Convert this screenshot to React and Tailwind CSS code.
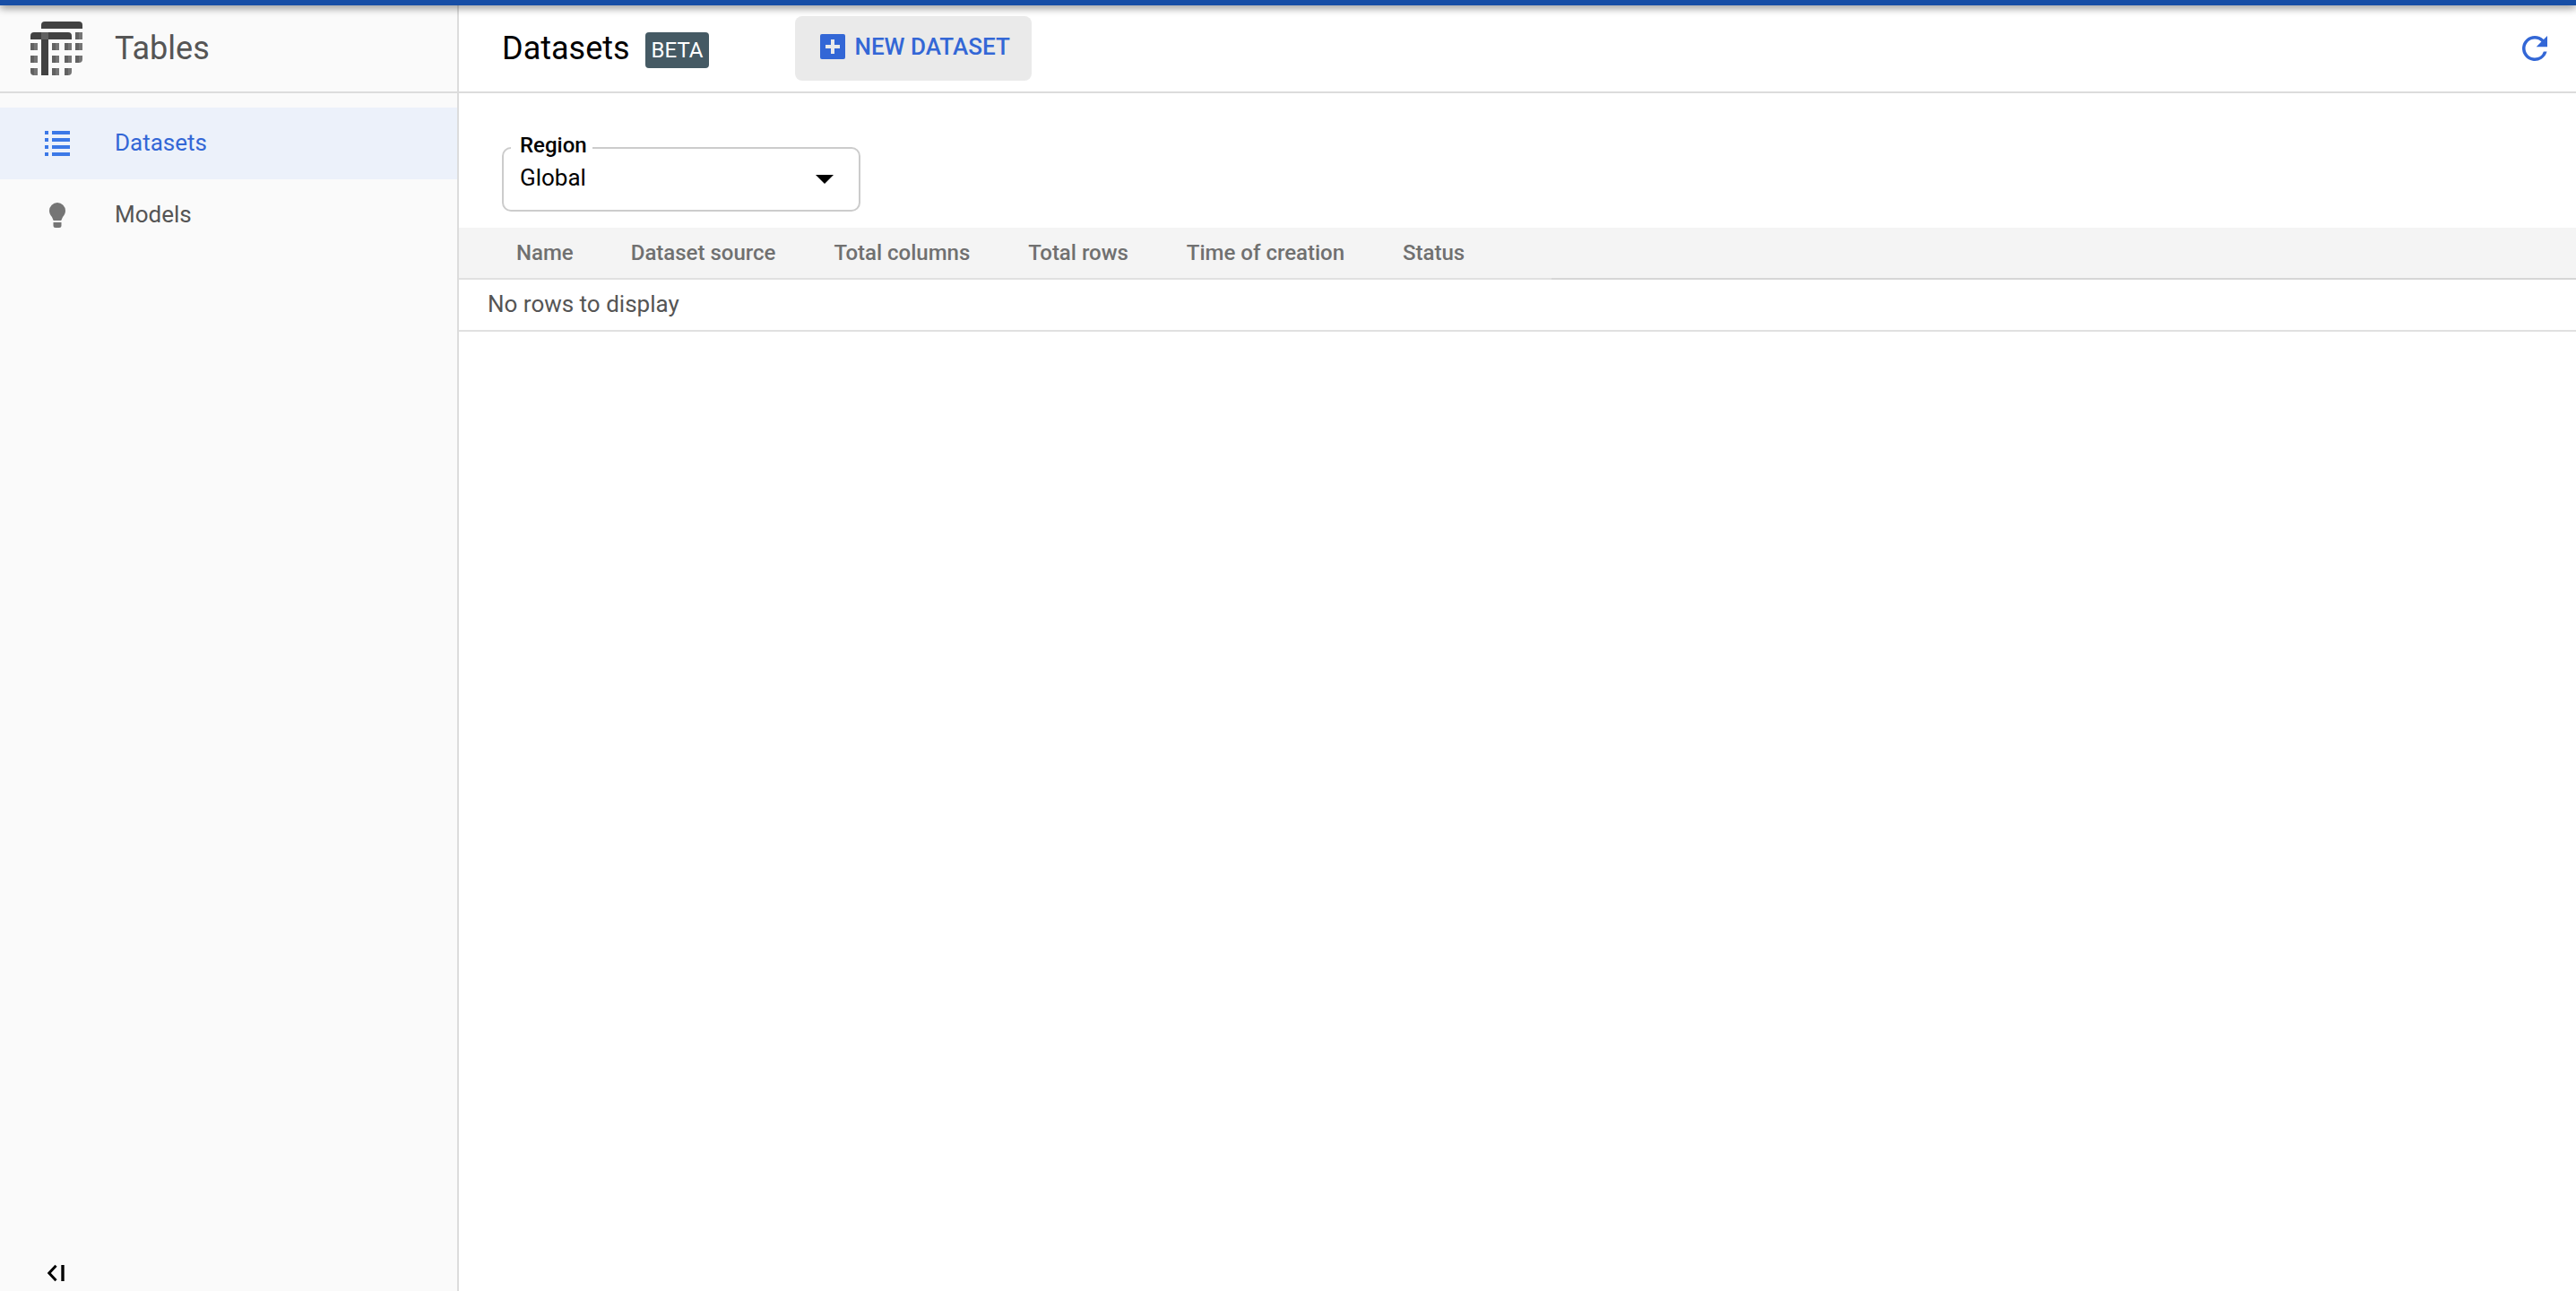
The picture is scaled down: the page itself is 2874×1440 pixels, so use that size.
const columns = [
  "Name",
  "Dataset source",
  "Total columns",
  "Total rows",
  "Time of creation",
  "Status",
];

function TablesLogo() {
  const cells = [
    [0, 24], [0, 38],
    [24, 24], [24, 38], [24, 52],
    [38, 24], [38, 38],
    [50, 12], [50, 24],
  ];
  return (
    <svg className="h-[60px] w-[58px]" viewBox="0 0 58 60" aria-hidden="true">
      <path d="M12 8V4a4 4 0 0 1 4-4h38a4 4 0 0 1 4 4v4z" fill="#424242" />
      <path d="M0 20v-4a4 4 0 0 1 4-4h38a4 4 0 0 1 4 4v4H20v40h-8V20z" fill="#424242" />
      <rect x="12" y="12" width="8" height="8" fill="#616161" />
      {cells.map(([x, y]) => (
        <g key={`${x}-${y}`}>
          <rect x={x} y={y} width="4" height="8" fill="#616161" />
          <rect x={x + 4} y={y} width="4" height="8" fill="#757575" />
        </g>
      ))}
      <path d="M0 52h4v8a4 4 0 0 1-4-4z" fill="#616161" />
      <rect x="4" y="52" width="4" height="8" fill="#757575" />
      <rect x="38" y="52" width="4" height="8" fill="#616161" />
      <path d="M42 52h4v4a4 4 0 0 1-4 4z" fill="#757575" />
      <rect x="50" y="38" width="4" height="8" fill="#616161" />
      <path d="M54 38h4v4a4 4 0 0 1-4 4z" fill="#757575" />
    </svg>
  );
}

function ListIcon() {
  return (
    <svg className="h-7 w-7" viewBox="0 0 28 28" fill="#3b78e7" aria-hidden="true">
      <path d="M0 0h4v4H0zM8 0h20v4H8zM0 8h4v4H0zM8 8h20v4H8zM0 16h4v4H0zM8 16h20v4H8zM0 24h4v4H0zM8 24h20v4H8z" />
    </svg>
  );
}

function BulbIcon() {
  return (
    <svg className="h-7 w-7" viewBox="0 0 28 28" fill="#757575" aria-hidden="true">
      <path d="M14 0a9 9 0 0 1 9 9c0 3-1.300 5-2.600 6.600C19 17.300 19 20 18 20h-8c-1 0-1-2.700-2.400-4.400C6.300 14 5 12 5 9a9 9 0 0 1 9-9zM9.500 22h9v3.500A2.500 2.500 0 0 1 16 28h-4a2.500 2.500 0 0 1-2.500-2.500z" />
    </svg>
  );
}

function Sidebar() {
  return (
    <aside className="flex w-[512px] shrink-0 flex-col border-r-2 border-[#dcdcdc] bg-[#fafafa] text-[#555]">
      <div className="flex h-[98px] items-center border-b-2 border-[#dcdcdc] pl-[34px]">
        <TablesLogo />
        <span className="ml-9 text-4xl">Tables</span>
      </div>
      <nav className="mt-4 text-[26px]">
        <a href="#datasets" aria-current="page" className="flex h-20 items-center gap-[50px] bg-[#ecf1fa] pl-[50px] text-[#3367d6]">
          <ListIcon />
          <span className="pb-0.5">Datasets</span>
        </a>
        <a href="#models" className="flex h-20 items-center gap-[50px] pl-[50px]">
          <BulbIcon />
          <span className="pb-0.5">Models</span>
        </a>
      </nav>
      <button type="button" aria-label="Collapse menu" className="mt-auto mb-2 ml-[50px] flex h-6 w-6 items-center justify-center">
        <svg className="h-6 w-6" viewBox="0 0 24 24" fill="none" stroke="#000" aria-hidden="true">
          <path d="M12.500 3.800L4.800 12l7.700 8.200" strokeWidth="3" />
          <path d="M20 3v18" strokeWidth="3.400" />
        </svg>
      </button>
    </aside>
  );
}

function Header() {
  return (
    <header className="flex h-[98px] items-center border-b-2 border-[#dcdcdc] pl-12 pr-[25px]">
      <h1 className="text-4xl">Datasets</h1>
      <span className="ml-[17px] mt-1 flex h-10 items-center rounded-sm bg-[#455a64] px-[7px] text-2xl text-white">BETA</span>
      <button type="button" className="ml-24 flex h-[72px] items-center gap-[10px] rounded-lg bg-[#eaeaea] pb-1 pl-7 pr-6 text-[26px] font-medium text-[#3367d6]">
        <svg className="h-7 w-7" viewBox="0 0 28 28" aria-hidden="true">
          <rect width="28" height="28" rx="2" fill="#3367d6" />
          <path d="M14 6v16M6 14h16" stroke="#eaeaea" strokeWidth="4" />
        </svg>
        <span>NEW DATASET</span>
      </button>
      <button type="button" aria-label="Refresh" className="ml-auto">
        <svg className="h-[42px] w-[42px]" viewBox="0 0 24 24" fill="#3367d6" aria-hidden="true">
          <path d="M17.650 6.350A7.958 7.958 0 0 0 12 4a8 8 0 1 0 7.730 10h-2.080A5.990 5.990 0 0 1 12 18c-3.310 0-6-2.690-6-6s2.690-6 6-6c1.660 0 3.140.69 4.220 1.780L13 11h7V4l-2.350 2.350z" />
        </svg>
      </button>
    </header>
  );
}

function RegionField() {
  return (
    <div className="relative ml-12 mt-[60px] w-[400px]">
      <select id="region" className="block h-[72px] w-full appearance-none rounded-[10px] border-2 border-[#ccc] bg-white pb-1 pl-[18px] text-[26px] text-black">
        <option>Global</option>
      </select>
      <label htmlFor="region" className="absolute -top-4 left-[10px] bg-white pl-[10px] pr-1.5 text-2xl leading-7 font-medium">
        Region
      </label>
      <svg className="pointer-events-none absolute right-[30px] top-[31px] h-[10px] w-5" viewBox="0 0 20 10" aria-hidden="true">
        <path d="M0 0h20L10 10z" />
      </svg>
    </div>
  );
}

function DatasetTable() {
  return (
    <table className="mt-[18px] w-full border-separate border-spacing-0 text-left">
      <thead className="bg-[#f4f4f4] text-2xl text-[#707070]">
        <tr>
          {columns.map((name) => (
            <th key={name} scope="col" className="h-[58px] whitespace-nowrap border-b-2 border-[#e0e0e0] pl-8 pr-[33px] font-medium first:pl-16 first:pr-8">
              {name}
            </th>
          ))}
          <td className="border-b-2 border-[#e0e0e0] px-8" />
          <td className="w-full border-b-2 border-[#d6d6d6]" />
        </tr>
      </thead>
      <tbody>
        <tr>
          <td colSpan={8} className="h-[58px] border-b-2 border-[#e0e0e0] px-8 pb-0.5 text-[26px] leading-8 text-[#555]">
            No rows to display
          </td>
        </tr>
      </tbody>
    </table>
  );
}

export default function App() {
  return (
    <div className="flex min-h-screen flex-col bg-white font-[Roboto,sans-serif] text-black">
      <div className="relative h-[6px] bg-[#174ea6] shadow-[0_2px_10px_rgba(0,0,0,0.6)]" />
      <div className="flex flex-1">
        <Sidebar />
        <main className="min-w-0 flex-1">
          <Header />
          <RegionField />
          <DatasetTable />
        </main>
      </div>
    </div>
  );
}
